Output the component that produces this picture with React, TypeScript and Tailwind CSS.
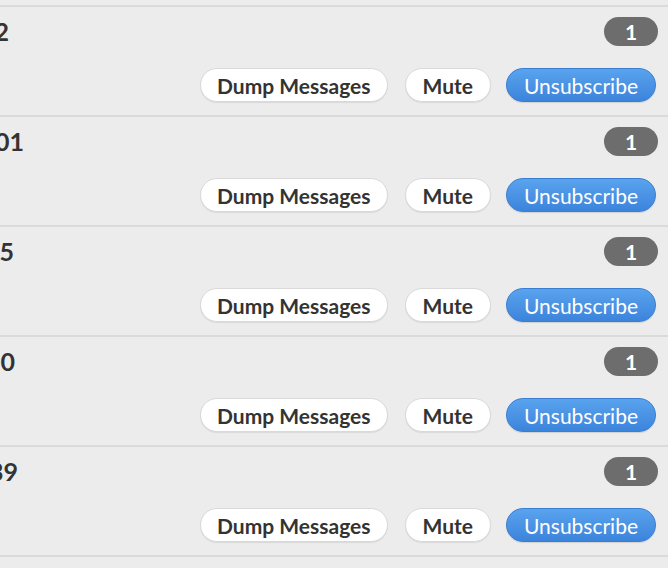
import React from "react";

type Channel = {
  name: string;
  count: number;
  clip: string;
};

const channels: Channel[] = [
  { name: "orders.events.v2", count: 1, clip: "w-[9px]" },
  { name: "orders.events.v2.1001", count: 1, clip: "w-[24px]" },
  { name: "billing.queue.15", count: 1, clip: "w-[14px]" },
  { name: "billing.queue.20", count: 1, clip: "w-[15px]" },
  { name: "audit.stream.839", count: 1, clip: "w-[18px]" },
];

function PillButton({ children, wide }: { children: React.ReactNode; wide?: boolean }) {
  return (
    <button
      className={`h-[34px] ${wide ? "px-[17px]" : "px-[16px]"} rounded-full bg-white border border-[#d9d9d9] shadow-[0_1px_1px_rgba(0,0,0,0.08)] text-[21px] font-bold text-[#333] leading-none`}
    >
      {children}
    </button>
  );
}

function ChannelRow({ channel }: { channel: Channel }) {
  return (
    <div className="border-t-2 border-[#dadada] pt-[10px] pb-[13px] pr-[10px]">
      {/* Header */}
      <div className="flex items-center justify-between h-[29px]">
        <div className={`${channel.clip} flex justify-end`}>
          <span className="whitespace-nowrap text-[25px] font-bold text-[#333] leading-none">
            {channel.name}
          </span>
        </div>
        <span className="w-[54px] h-[29px] rounded-full bg-[#6d6d6d] text-white text-[21px] font-bold flex items-center justify-center leading-none">
          {channel.count}
        </span>
      </div>

      {/* Actions */}
      <div className="flex justify-end items-center mt-[22px] pr-[2px]">
        <PillButton>Dump Messages</PillButton>
        <span className="w-[17px]" />
        <PillButton wide>Mute</PillButton>
        <span className="w-[15px]" />
        <button className="h-[34px] px-[17px] rounded-full bg-gradient-to-b from-[#5aa3ee] to-[#3b84dc] border border-[#3a7ed2] shadow-[0_1px_1px_rgba(0,0,0,0.12)] text-[21px] text-white leading-none">
          Unsubscribe
        </button>
      </div>
    </div>
  );
}

export default function App() {
  return (
    <div
      className="w-[668px] h-[568px] overflow-hidden bg-[#ececec] pt-[5px]"
      style={{ fontFamily: "Lato, 'Noto Sans', sans-serif" }}
    >
      {channels.map((c) => (
        <ChannelRow key={c.name} channel={c} />
      ))}
      <div className="border-t-2 border-[#dadada]" />
    </div>
  );
}
